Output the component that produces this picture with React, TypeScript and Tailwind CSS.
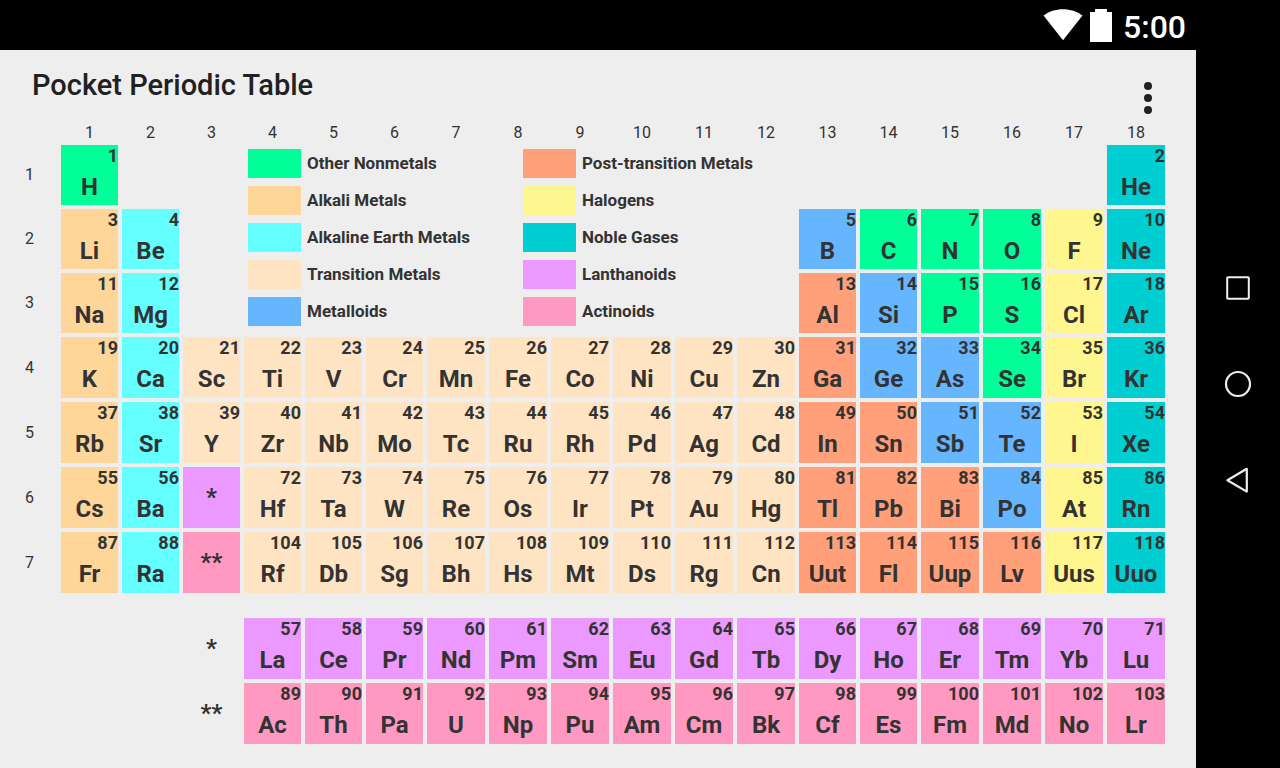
const colors = {
  nonmetal: 'bg-[#00ff99]',
  alkali: 'bg-[#ffd699]',
  alkaline: 'bg-[#66ffff]',
  transition: 'bg-[#ffe4c4]',
  metalloid: 'bg-[#66b5ff]',
  post: 'bg-[#ffa07a]',
  halogen: 'bg-[#fff68f]',
  noble: 'bg-[#00ced1]',
  lanthanoid: 'bg-[#eb99ff]',
  actinoid: 'bg-[#ff99c2]',
};

type Category = keyof typeof colors;

const legend: [Category, string][] = [
  ['nonmetal', 'Other Nonmetals'],
  ['alkali', 'Alkali Metals'],
  ['alkaline', 'Alkaline Earth Metals'],
  ['transition', 'Transition Metals'],
  ['metalloid', 'Metalloids'],
  ['post', 'Post-transition Metals'],
  ['halogen', 'Halogens'],
  ['noble', 'Noble Gases'],
  ['lanthanoid', 'Lanthanoids'],
  ['actinoid', 'Actinoids'],
];

const symbols = (
  'H He Li Be B C N O F Ne Na Mg Al Si P S Cl Ar K Ca Sc Ti V Cr Mn Fe Co Ni Cu Zn Ga Ge As Se Br Kr ' +
  'Rb Sr Y Zr Nb Mo Tc Ru Rh Pd Ag Cd In Sn Sb Te I Xe Cs Ba La Ce Pr Nd Pm Sm Eu Gd Tb Dy Ho Er Tm Yb Lu ' +
  'Hf Ta W Re Os Ir Pt Au Hg Tl Pb Bi Po At Rn Fr Ra Ac Th Pa U Np Pu Am Cm Bk Cf Es Fm Md No Lr ' +
  'Rf Db Sg Bh Hs Mt Ds Rg Cn Uut Fl Uup Lv Uus Uuo'
).split(' ');

const members: Partial<Record<Category, number[]>> = {
  nonmetal: [1, 6, 7, 8, 15, 16, 34],
  alkali: [3, 11, 19, 37, 55, 87],
  alkaline: [4, 12, 20, 38, 56, 88],
  metalloid: [5, 14, 32, 33, 51, 52, 84],
  post: [13, 31, 49, 50, 81, 82, 83, 113, 114, 115, 116],
  halogen: [9, 17, 35, 53, 85, 117],
  noble: [2, 10, 18, 36, 54, 86, 118],
};

// groups whose column is a touch narrower than the rest
const narrowGroups = [1, 2, 3, 4, 5, 6, 13, 14];

function categoryOf(n: number): Category {
  if (n >= 57 && n <= 71) return 'lanthanoid';
  if (n >= 89 && n <= 103) return 'actinoid';
  const found = (Object.keys(members) as Category[]).find((key) => members[key]?.includes(n));
  return found ?? 'transition';
}

function range(from: number, to: number) {
  return Array.from({ length: to - from + 1 }, (_, i) => from + i);
}

function Elements({ from, to }: { from: number; to: number }) {
  return range(from, to).map((n) => (
    <td key={n} className={`p-0 align-top font-bold ${colors[categoryOf(n)]}`}>
      <div className="text-right text-lg leading-[22px]">{n}</div>
      <div className="pt-0.5 text-center text-2xl leading-9">{symbols[n - 1]}</div>
    </td>
  ));
}

function Period({ n }: { n: number }) {
  return (
    <th scope="row" className="p-0 pr-0.5 text-base font-normal">
      {n}
    </th>
  );
}

function Marker({ text, color = '' }: { text: string; color?: string }) {
  return <td className={`p-0 pb-0.5 text-center text-2xl font-bold ${color}`}>{text}</td>;
}

function Legend() {
  return (
    <ul className="grid grid-flow-col grid-cols-[275px_auto] grid-rows-5 gap-y-2 p-1">
      {legend.map(([category, label]) => (
        <li key={category} className="flex items-start gap-1.5">
          <span className={`h-[29px] w-[53px] ${colors[category]}`} />
          <span className="text-[17px] leading-7 font-bold whitespace-nowrap">{label}</span>
        </li>
      ))}
    </ul>
  );
}

function PeriodicTable() {
  return (
    <table className="w-full table-fixed border-separate border-spacing-1 text-[#333]">
      <thead>
        <tr className="h-5">
          <td className="w-[53px] p-0" />
          {range(1, 18).map((group) => (
            <th
              key={group}
              scope="col"
              className={`p-0 pt-1 text-base leading-4 font-normal ${narrowGroups.includes(group) ? 'w-[57px]' : 'w-[58px]'}`}
            >
              {group}
            </th>
          ))}
        </tr>
      </thead>
      <tbody>
        <tr className="h-[60px]">
          <Period n={1} />
          <Elements from={1} to={1} />
          <td colSpan={2} />
          <td colSpan={9} rowSpan={3} className="p-0 align-top">
            <Legend />
          </td>
          <td colSpan={5} />
          <Elements from={2} to={2} />
        </tr>
        <tr className="h-[60px]">
          <Period n={2} />
          <Elements from={3} to={4} />
          <td />
          <Elements from={5} to={10} />
        </tr>
        <tr className="h-[60px]">
          <Period n={3} />
          <Elements from={11} to={12} />
          <td />
          <Elements from={13} to={18} />
        </tr>
        <tr className="h-[61px]">
          <Period n={4} />
          <Elements from={19} to={36} />
        </tr>
        <tr className="h-[61px]">
          <Period n={5} />
          <Elements from={37} to={54} />
        </tr>
        <tr className="h-[61px]">
          <Period n={6} />
          <Elements from={55} to={56} />
          <Marker text="*" color={colors.lanthanoid} />
          <Elements from={72} to={86} />
        </tr>
        <tr className="h-[61px]">
          <Period n={7} />
          <Elements from={87} to={88} />
          <Marker text="**" color={colors.actinoid} />
          <Elements from={104} to={118} />
        </tr>
      </tbody>
      <tbody>
        <tr className="h-[17px]">
          <td colSpan={19} className="p-0" />
        </tr>
        <tr className="h-[61px]">
          <td colSpan={3} />
          <Marker text="*" />
          <Elements from={57} to={71} />
        </tr>
        <tr className="h-[61px]">
          <td colSpan={3} />
          <Marker text="**" />
          <Elements from={89} to={103} />
        </tr>
      </tbody>
    </table>
  );
}

function StatusBar() {
  return (
    <div className="flex h-[50px] items-start justify-end pt-[9px] pr-2.5 text-white">
      <svg width="40" height="32" viewBox="0 0 40 32" fill="currentColor" aria-hidden="true">
        <path d="M0.5 6.5C11-2 29-2 39.5 6.5L20 31.2Z" />
      </svg>
      <svg className="ml-[7px]" width="22" height="33" viewBox="0 0 22 33" fill="currentColor" aria-hidden="true">
        <path d="M5 0h12v3h5v30H0V3h5z" />
      </svg>
      <span className="ml-[11px] pt-0.5 text-[32px] leading-8 font-medium">5:00</span>
    </div>
  );
}

function NavigationBar() {
  return (
    <nav className="flex w-[84px] shrink-0 flex-col items-stretch justify-center bg-black text-[#eee]">
      <button type="button" aria-label="Recent apps" className="flex h-24 items-center justify-center">
        <svg width="28" height="28" viewBox="0 0 28 28" fill="none" stroke="currentColor" strokeWidth="2">
          <rect x="3.2" y="3.2" width="21.6" height="21.6" rx="0.8" />
        </svg>
      </button>
      <button type="button" aria-label="Home" className="flex h-24 items-center justify-center">
        <svg width="28" height="28" viewBox="0 0 28 28" fill="none" stroke="currentColor" strokeWidth="2.2">
          <circle cx="14" cy="14" r="12" />
        </svg>
      </button>
      <button type="button" aria-label="Back" className="flex h-24 items-center justify-center">
        <svg
          width="28"
          height="28"
          viewBox="0 0 28 28"
          fill="none"
          stroke="currentColor"
          strokeWidth="2.2"
          strokeLinejoin="round"
        >
          <path d="M22.8 2.8v22.8L3.4 14.2z" />
        </svg>
      </button>
    </nav>
  );
}

export default function App() {
  return (
    <div className="flex min-h-screen bg-black font-['Roboto',sans-serif]">
      <div className="flex min-w-0 flex-1 flex-col">
        <StatusBar />
        <div className="flex-1 bg-[#eee]">
          <header className="flex h-[67px] items-start justify-between pr-9 pl-8 text-[#212121]">
            <h1 className="pt-[17px] text-[29px] leading-9 font-medium">Pocket Periodic Table</h1>
            <button type="button" aria-label="More options" className="mt-8 flex w-6 justify-center">
              <svg width="8" height="32" viewBox="0 0 8 32" fill="currentColor">
                <circle cx="4" cy="4" r="4" />
                <circle cx="4" cy="16" r="4" />
                <circle cx="4" cy="28" r="4" />
              </svg>
            </button>
          </header>
          <main className="pr-[27px]">
            <PeriodicTable />
          </main>
        </div>
      </div>
      <NavigationBar />
    </div>
  );
}
